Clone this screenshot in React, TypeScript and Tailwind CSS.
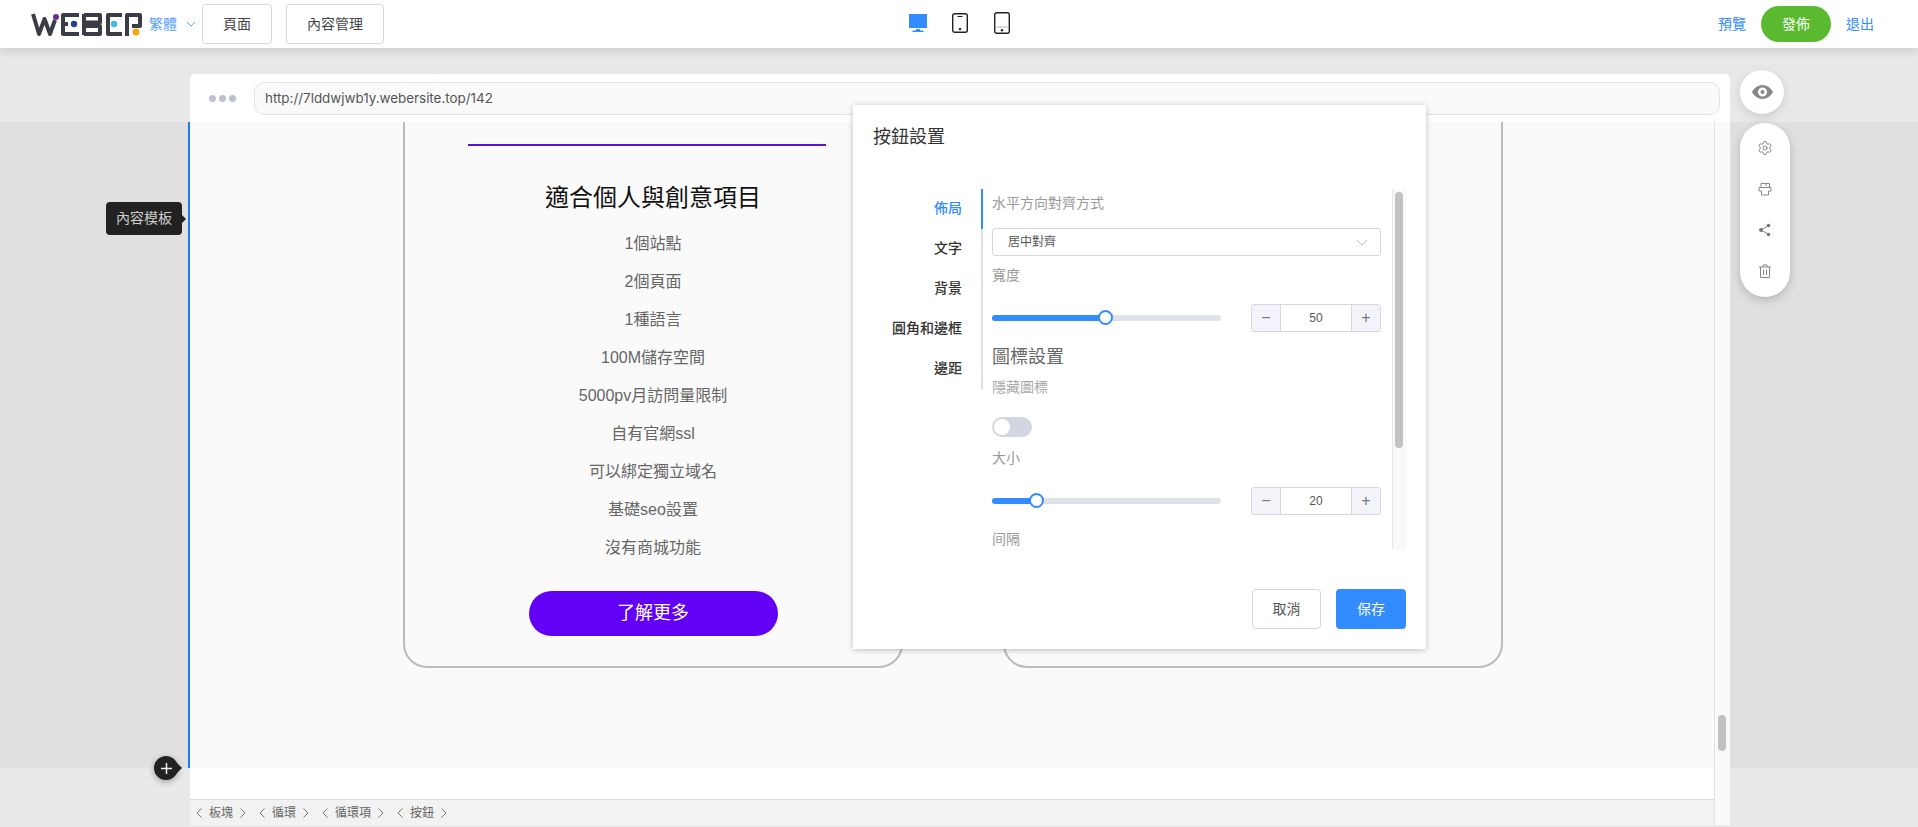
import React from "react";
import { Settings } from "lucide-react";

const font = { fontFamily: '"Liberation Sans","Noto Sans CJK TC",sans-serif' };

function Logo() {
  return (
    <svg width="112" height="26" viewBox="0 0 112 26" className="shrink-0" fill="none">
      <g stroke="#3a3d46" strokeWidth="4" strokeLinejoin="round">
        <path d="M3 3 L9 23 L14.500 8 L20 23 L25 9" />
        <path d="M49 4 H33 V23 H49 M33 13 H38" />
        <path d="M54 4 H70 V11.500 H54 M54 15 H70 V23 H54 M54 3 V24" />
        <path d="M92 4 H78 V23 H92 M78 13 H80" />
        <path d="M97 25 V4 H110 V15 H102" />
      </g>
      <circle cx="26" cy="6" r="3" fill="#6a2c91" />
      <circle cx="44" cy="13" r="3.200" fill="#23418f" />
      <circle cx="84" cy="13" r="3.200" fill="#45b9e6" />
      <circle cx="106" cy="21" r="3.400" fill="#f5a40e" />
    </svg>
  );
}

function Slider({ fill }: { fill: string }) {
  return (
    <div className="relative h-[6px] w-[229px] rounded-full bg-[#dfe2e8]">
      <div className={`relative h-[6px] rounded-full bg-[#338cff] ${fill}`}>
        <span className="absolute right-[-7px] top-[-5px] h-[15px] w-[15px] rounded-full border-2 border-[#338cff] bg-white" />
      </div>
    </div>
  );
}

function NumberBox({ value }: { value: string }) {
  return (
    <div className="flex h-[28px] w-[130px] overflow-hidden rounded-[3px] border border-[#d5d8e3] text-[12px] text-[#555]">
      <span className="flex w-[28px] items-center justify-center bg-[#f2f4f9] text-[16px] text-[#777]">−</span>
      <span className="flex flex-1 items-center justify-center border-x border-[#d5d8e3]">{value}</span>
      <span className="flex w-[28px] items-center justify-center bg-[#f2f4f9] text-[16px] text-[#777]">+</span>
    </div>
  );
}

function Crumb({ label }: { label: string }) {
  return (
    <div className="flex items-center gap-[7px] text-[12px] text-[#666]">
      <svg width="6" height="10" viewBox="0 0 6 10" fill="none"><path d="M5.500 .5L1 5l4.500 4.500" stroke="#777" /></svg>
      <span>{label}</span>
      <svg width="6" height="10" viewBox="0 0 6 10" fill="none"><path d="M.5 .5L5 5 .5 9.500" stroke="#777" /></svg>
    </div>
  );
}

const features = ["1個站點", "2個頁面", "1種語言", "100M儲存空間", "5000pv月訪問量限制", "自有官網ssl", "可以綁定獨立域名", "基礎seo設置", "沒有商城功能"];

function Dialog() {
  return (
    <div className="absolute left-[853px] top-[105px] z-20 flex h-[544px] w-[573px] flex-col bg-white shadow-[0_1px_6px_rgba(0,0,0,0.25)]">
      <div className="flex h-[84px] items-start px-5 pt-[19px] text-[18px] leading-[26px] text-[#333]">按鈕設置</div>
      <div className="flex h-[360px] pr-5">
        <div className="flex w-[130px] flex-col">
          <div className="flex h-[200px] w-[130px] flex-col items-end border-r-2 border-[#dcdfe6] text-[14px] font-medium text-[#333]">
            <div className="relative -mr-[2px] flex h-10 w-full items-center justify-end border-r-2 border-[#338cff] pb-[1px] pr-[19px] text-[#338cff]">佈局</div>
            <div className="flex h-10 items-center pb-[1px] pr-[19px]">文字</div>
            <div className="flex h-10 items-center pb-[1px] pr-[19px]">背景</div>
            <div className="flex h-10 items-center pb-[1px] pr-[19px]">圓角和邊框</div>
            <div className="flex h-10 items-center pb-[1px] pr-[19px]">邊距</div>
          </div>
        </div>
        <div className="ml-[9px] w-[389px] overflow-hidden">
          <div className="mt-[4px] h-5 text-[14px] leading-5 text-[#999]">水平方向對齊方式</div>
          <div className="mt-[15px] flex h-[28px] items-center justify-between rounded-[3px] border border-[#d5d8e3] pl-[15px] pr-[12px] text-[12px] text-[#555]">
            <span>居中對齊</span>
            <svg width="12" height="7" viewBox="0 0 12 7" fill="none"><path d="M1 1l5 5 5-5" stroke="#bbb" /></svg>
          </div>
          <div className="mt-[9px] h-5 text-[14px] leading-5 text-[#999]">寬度</div>
          <div className="mt-[19px] flex h-[28px] items-center justify-between">
            <Slider fill="w-[114px]" />
            <NumberBox value="50" />
          </div>
          <div className="mt-[12px] h-[26px] text-[18px] leading-[26px] text-[#666]">圖標設置</div>
          <div className="mt-[7px] h-5 text-[14px] leading-5 text-[#aaa]">隱藏圖標</div>
          <div className="mt-[20px] flex h-5 w-10 items-center rounded-full bg-[#d3d6e0] pl-[2px]">
            <span className="h-4 w-4 rounded-full bg-white" />
          </div>
          <div className="mt-[11px] h-5 text-[14px] leading-5 text-[#999]">大小</div>
          <div className="mt-[19px] flex h-[28px] items-center justify-between">
            <Slider fill="w-[45px]" />
            <NumberBox value="20" />
          </div>
          <div className="mt-[14px] h-5 text-[14px] leading-5 text-[#999]">间隔</div>
        </div>
        <div className="ml-[11px] h-full w-[14px] border-l border-[#e6e6e6] bg-[#f9f9f9] pl-[2px] pt-[3px]">
          <div className="h-[256px] w-[8px] rounded-full bg-[#c1c1c1]" />
        </div>
      </div>
      <div className="mt-[40px] flex justify-end gap-[15px] pr-5">
        <div className="flex h-10 w-[69px] items-center justify-center rounded-[4px] border border-[#d5d8e3] text-[14px] text-[#555]">取消</div>
        <div className="flex h-10 w-[70px] items-center justify-center rounded-[4px] bg-[#338cff] text-[14px] text-white">保存</div>
      </div>
    </div>
  );
}

export default function App() {
  return (
    <div className="relative flex h-[827px] w-[1918px] flex-col overflow-hidden bg-[#e9e9e9]" style={font}>
      <header className="relative z-10 flex h-12 shrink-0 items-center bg-white shadow-[0_2px_10px_rgba(0,0,0,0.14)]">
        <div className="ml-[30px] flex w-[172px] items-center">
          <Logo />
          <span className="ml-[7px] text-[14px] text-[#5aa2ff]">繁體</span>
          <svg className="ml-[9px]" width="10" height="6" viewBox="0 0 10 6" fill="none"><path d="M1 1l4 4 4-4" stroke="#6aa8ff" /></svg>
        </div>
        <div className="flex h-10 w-[70px] items-center justify-center rounded-[3px] border border-[#d8dae6] text-[14px] text-[#444]">頁面</div>
        <div className="ml-[14px] flex h-10 w-[98px] items-center justify-center rounded-[3px] border border-[#d8dae6] text-[14px] text-[#444]">內容管理</div>
        <div className="ml-[525px] -mt-[3px] flex items-center gap-[25px]">
          <svg width="18" height="18" viewBox="0 0 18 18"><rect width="18" height="14" fill="#338cff" /><path d="M7 15h4v1.500H7zM3.500 16.500h11V18h-11z" fill="#338cff" /></svg>
          <svg width="16" height="20" viewBox="0 0 16 20" fill="none"><rect x=".7" y=".7" width="14.600" height="18.600" rx="2" stroke="#222" strokeWidth="1.400" /><path d="M5.500 3.500h5" stroke="#222" /><circle cx="8" cy="16" r="1.200" fill="#222" /></svg>
          <svg width="16" height="22" viewBox="0 0 16 22" fill="none" className="ml-[1px]"><rect x=".7" y=".7" width="14.600" height="20.600" rx="2" stroke="#222" strokeWidth="1.400" /><path d="M1 15h14" stroke="#bbb" /><circle cx="8" cy="18.200" r="1.200" fill="#222" /></svg>
        </div>
        <div className="ml-auto mr-[44px] flex items-center text-[14px]">
          <span className="text-[#338cff]">預覽</span>
          <span className="ml-[15px] flex h-9 w-[70px] items-center justify-center rounded-full bg-[#5ab92e] text-white">發佈</span>
          <span className="ml-[15px] text-[#338cff]">退出</span>
        </div>
      </header>

      <div className="h-[26px] shrink-0 bg-[#e8e8e8]" />

      <div className="flex h-12 shrink-0 bg-[#e8e8e8] pl-[190px]">
        <div className="flex w-[1540px] items-center rounded-t-[5px] bg-white pl-[19px] pr-[10px]">
          <div className="flex gap-[3px]">
            <span className="h-[7px] w-[7px] rounded-full bg-[#bcc0d0]" />
            <span className="h-[7px] w-[7px] rounded-full bg-[#bcc0d0]" />
            <span className="h-[7px] w-[7px] rounded-full bg-[#bcc0d0]" />
          </div>
          <div className="ml-[18px] flex h-[33px] flex-1 items-center rounded-[10px] border border-[#e2e2ee] bg-[#fafafa] pl-[10px] font-['Inter'] text-[13.4px] text-[#555]">http://7lddwjwb1y.webersite.top/142</div>
        </div>
      </div>

      <div className="flex h-[646px] shrink-0 overflow-hidden bg-[#e0e0e0] pl-[188px]">
        <div className="flex w-[1542px] border-l-2 border-[#1e7bff]">
          <div className="flex w-[1525px] gap-[100px] overflow-hidden border-r border-[#e2e2e2] bg-[#fafafa] pl-[213px]">
            <div className="-mt-[60px] flex h-[606px] w-[500px] shrink-0 flex-col items-center rounded-[24px] border-2 border-[#bbb] pt-[80px]">
              <div className="mr-[12px] h-[2px] w-[358px] bg-[#5a10d8]" />
              <h2 className="mt-[31.500px] h-[40px] text-[24px] leading-[40px] text-[#111]">適合個人與創意項目</h2>
              <ul className="mt-[7px] flex flex-col items-center text-[16px] text-[#666]">
                {features.map((f) => (
                  <li key={f} className="flex h-[38px] items-center">{f}</li>
                ))}
              </ul>
              <div className="mt-[24px] flex h-[45px] w-[249px] items-center justify-center rounded-full bg-[#6200f5] text-[18px] text-white">了解更多</div>
            </div>
            <div className="-mt-[60px] h-[606px] w-[500px] shrink-0 rounded-[24px] border-2 border-[#bbb]" />
          </div>
          <div className="relative flex-1 bg-[#fafafa]">
            <div className="absolute left-[3px] top-[593px] h-9 w-2 rounded-full bg-[#c1c1c1]" />
          </div>
        </div>
      </div>

      <div className="flex flex-1 flex-col pl-[190px]">
        <div className="flex h-[57px] w-[1540px]">
          <div className="flex w-[1525px] flex-col border-r border-[#e2e2e2]">
            <div className="h-[31px] bg-white" />
            <div className="flex h-[26px] items-center gap-[13px] border-t border-[#dcdcdc] bg-[#f2f2f2] pl-[6px]">
              <Crumb label="板塊" />
              <Crumb label="循環" />
              <Crumb label="循環項" />
              <Crumb label="按鈕" />
            </div>
          </div>
          <div className="flex-1 bg-[#fafafa]" />
        </div>
      </div>

      <Dialog />

      <div className="absolute left-[1740px] top-[70px] z-20 flex h-11 w-11 items-center justify-center rounded-full bg-white shadow-[0_3px_10px_rgba(0,0,0,0.12)]">
        <svg width="21" height="14" viewBox="0 0 21 14"><path fillRule="evenodd" d="M10.500 0C15 0 19 3 21 7c-2 4-6 7-10.500 7S2 11 0 7c2-4 6-7 10.500-7zm0 2.500a4.500 4.500 0 100 9 4.500 4.500 0 000-9z" fill="#888" /><circle cx="10.500" cy="7" r="2" fill="#888" /></svg>
      </div>
      <div className="absolute left-[1740px] top-[123px] z-20 flex h-[174px] w-[50px] flex-col items-center gap-[25px] rounded-full bg-white pt-[17px] shadow-[0_3px_10px_rgba(0,0,0,0.2)]">
        <Settings size={16} strokeWidth={1.300} color="#777" className="h-[16px]" />
        <svg width="14" height="14" viewBox="0 0 14 14" fill="none" stroke="#888" className="h-[16px]"><path d="M3 1.500h8.500v4H13v3.500h-2.500V13h-7V9H1V5.500h2zM1 5.500h12M8 1.500v2.500" /></svg>
        <svg width="14" height="14" viewBox="0 0 14 14" className="h-[16px]" fill="#777"><path d="M3 7l7-4M3 7l7 4" stroke="#777" strokeWidth=".9" /><circle cx="3" cy="7" r="2" /><circle cx="10.500" cy="2.500" r="1.800" /><circle cx="10.500" cy="11.500" r="1.800" /></svg>
        <svg width="14" height="14" viewBox="0 0 14 14" fill="none" stroke="#888" className="h-[16px]"><path d="M1 3h12M5 3V1h4v2M2.500 3v10.500h9V3M5.500 5.500v5.500M8.500 5.500v5.500" /></svg>
      </div>

      <div className="absolute left-[106px] top-[202px] z-20 flex h-[33px] w-[76px] items-center justify-center rounded-[4px] bg-[#222] text-[14px] text-[#ccc]">
        內容模板
        <span className="absolute right-[-4px] top-[13px] h-0 w-0 border-y-[4px] border-l-[4px] border-y-transparent border-l-[#222]" />
      </div>

      <div className="absolute left-[154px] top-[756px] z-20 flex h-6 w-6 items-center justify-center rounded-full bg-[#222] text-white shadow-[0_2px_6px_rgba(0,0,0,0.3)]">
        <svg width="13" height="13" viewBox="0 0 13 13"><path d="M6.500 1v11M1 6.500h11" stroke="#eee" strokeWidth="1.500" /></svg>
        <span className="absolute right-[-4px] top-[6px] h-0 w-0 border-y-[6px] border-l-[6px] border-y-transparent border-l-[#222]" />
      </div>
    </div>
  );
}
